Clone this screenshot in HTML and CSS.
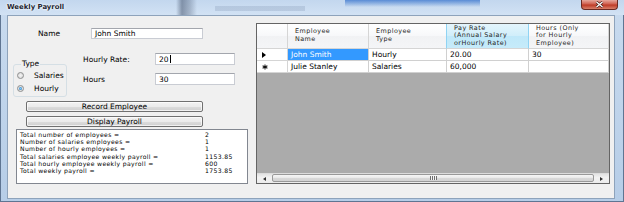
FILE: index.html
```html
<!DOCTYPE html>
<html lang="en">
<head>
  <meta charset="UTF-8" />
  <title>Weekly Payroll</title>
  <link rel="stylesheet" href="styles.css">
</head>
<body>
  <div class="window">
    <div class="titlebar">
      <span class="title">Weekly Payroll</span>
      <span class="close">
        <svg width="9" height="7" viewBox="0 0 9 7"><path d="M1.5 1 L7.5 6 M7.5 1 L1.5 6" stroke="#3a1410" stroke-width="2.6"/><path d="M1.5 1 L7.5 6 M7.5 1 L1.5 6" stroke="#fff" stroke-width="1.4"/></svg>
      </span>
    </div>

    <div class="client">
      <div class="left">
        <div class="name-row">
          <label class="lbl name-lbl">Name</label>
          <div class="textbox name-box">John Smith</div>
        </div>

        <div class="mid">
          <fieldset class="group">
            <legend>Type</legend>
            <div class="radio"><span class="dot"></span>Salaries</div>
            <div class="radio checked"><span class="dot"></span>Hourly</div>
          </fieldset>
          <div class="fields">
            <div class="field">
              <label class="lbl">Hourly Rate:</label>
              <div class="textbox">20<span class="caret"></span></div>
            </div>
            <div class="field">
              <label class="lbl">Hours</label>
              <div class="textbox">30</div>
            </div>
          </div>
        </div>

        <div class="buttons">
          <div class="btn">Record Employee</div>
          <div class="btn">Display Payroll</div>
        </div>

        <div class="listbox">
          <span>Total number of employees =</span><span>2</span>
          <span>Number of salaries employees =</span><span>1</span>
          <span>Number of hourly employees =</span><span>1</span>
          <span>Total salaries employee weekly payroll =</span><span>1153.85</span>
          <span>Total hourly employee weekly payroll =</span><span>600</span>
          <span>Total weekly payroll =</span><span>1753.85</span>
        </div>
      </div>

      <div class="dgv">
        <div class="dgv-table">
          <div class="hdr corner"></div>
          <div class="hdr">Employee<br>Name</div>
          <div class="hdr">Employee<br>Type</div>
          <div class="hdr hot">Pay Rate<br>(Annual Salary<br>orHourly Rate)</div>
          <div class="hdr">Hours (Only<br>for Hourly<br>Employee)</div>

          <div class="rowhdr"><span class="cur-arrow"></span></div>
          <div class="cell selected">John Smith</div>
          <div class="cell">Hourly</div>
          <div class="cell">20.00</div>
          <div class="cell">30</div>

          <div class="rowhdr">
            <svg width="6" height="6" viewBox="0 0 7 7"><path d="M3.5 0.5 V6.5 M0.7 2 L6.3 5 M6.3 2 L0.7 5" stroke="#111" stroke-width="1.2"/></svg>
          </div>
          <div class="cell">Julie Stanley</div>
          <div class="cell">Salaries</div>
          <div class="cell">60,000</div>
          <div class="cell"></div>
        </div>

        <div class="dgv-empty"></div>

        <div class="hscroll">
          <div class="sbtn"><span class="tri-left"></span></div>
          <div class="thumb"><span class="grip"></span></div>
          <div class="sbtn"><span class="tri-right"></span></div>
        </div>
      </div>
    </div>
  </div>
</body>
</html>
```

FILE: styles.css
```css
* {
  box-sizing: border-box;
}

body {
  margin: 0;
  width: 624px;
  height: 202px;
  overflow: hidden;
  font-family: "DejaVu Sans", "Liberation Sans", sans-serif;
  font-size: 7.5px;
  color: #000;
  background: #c0d4ea;
}

.window {
  width: 624px;
  height: 202px;
  display: flex;
  flex-direction: column;
  background: linear-gradient(#c9dbef, #b6cde7);
  box-shadow: inset 1px 0 0 #5f7592, inset -1px 0 0 #5f7592, inset 0 -1px 0 #5f7592;
}

/* title bar */
.titlebar {
  height: 15px;
  flex: none;
  display: flex;
  align-items: flex-start;
  padding-left: 7px;
  background:
    linear-gradient(to right, transparent 176px, rgba(70, 85, 110, 0.55) 182px, rgba(70, 85, 110, 0.3) 190px, transparent 197px),
    linear-gradient(rgba(55, 115, 205, 0.75), rgba(55, 115, 205, 0) 7px) 345px 0 / 135px 100% no-repeat,
    linear-gradient(rgba(120, 140, 170, 0.25), rgba(120, 140, 170, 0.25)) 215px 6px / 90px 5px no-repeat,
    linear-gradient(#c3d7ee, #d2e2f4);
}

.title {
  line-height: 15px;
  font-size: 6.9px;
  font-weight: bold;
  color: #1c2633;
  text-shadow: 0 0 3px #fff, 0 0 2px #fff;
}

.close {
  margin-left: auto;
  margin-right: 6px;
  width: 37px;
  height: 10px;
  display: flex;
  align-items: center;
  justify-content: center;
  border: 1px solid #6a2a22;
  border-top: none;
  border-radius: 0 0 4px 4px;
  background: linear-gradient(#e6a89c, #d0604f 45%, #bd3a25 55%, #d9806a);
}

/* client area */
.client {
  flex: 1;
  margin: 0 9px 3px 7px;
  background: #f0f0f0;
  border: 1px solid #8ea3bb;
  display: flex;
}

.left {
  width: 248px;
  flex: none;
}

.lbl {
  white-space: nowrap;
}

.textbox {
  height: 12px;
  background: #fff;
  border: 1px solid #c9ccd3;
  border-top-color: #a3a6ad;
  padding: 0 3px;
  display: flex;
  align-items: center;
  white-space: nowrap;
}

.caret {
  display: inline-block;
  width: 1px;
  height: 8px;
  background: #000;
  margin-left: 1px;
}

.name-row {
  display: flex;
  align-items: center;
  margin-top: 12px;
  height: 11px;
}

.name-lbl {
  margin-left: 30px;
  width: 53px;
}

.name-box {
  width: 112px;
  height: 11px;
}

.mid {
  display: flex;
  margin-top: 14px;
}

.group {
  margin: 7px 0 0 5px;
  width: 54px;
  height: 37px;
  padding: 0 0 0 3px;
  border: 1px solid #d5dfe5;
  border-radius: 3px;
}

.group legend {
  padding: 0 1px;
  margin-left: 4px;
  line-height: 8px;
}

.radio {
  display: flex;
  align-items: center;
  height: 8px;
  white-space: nowrap;
}

.radio:first-of-type {
  margin-top: 3px;
}

.radio + .radio {
  margin-top: 5px;
}

.dot {
  width: 7px;
  height: 7px;
  border-radius: 50%;
  border: 1px solid #8e8f8f;
  background: radial-gradient(#f4f4f4, #d4d4d4);
  margin-right: 10px;
  display: flex;
  align-items: center;
  justify-content: center;
}

.radio.checked .dot::after {
  content: "";
  width: 3px;
  height: 3px;
  border-radius: 50%;
  background: radial-gradient(#7fd0ff, #1a67b0);
}

.fields {
  margin-left: 16px;
  display: flex;
  flex-direction: column;
  gap: 8px;
}

.field {
  display: flex;
  align-items: center;
  height: 12px;
}

.field .lbl {
  width: 72px;
}

.field .textbox {
  width: 80px;
}

.buttons {
  margin: 4px 0 0 18px;
  display: flex;
  flex-direction: column;
  gap: 4px;
}

.btn {
  width: 177px;
  height: 11px;
  border: 1px solid #707070;
  border-radius: 2px;
  background: linear-gradient(#f2f2f2, #ebebeb 50%, #dddddd 51%, #cfcfcf);
  box-shadow: inset 0 0 0 1px rgba(255, 255, 255, 0.7);
  display: flex;
  align-items: center;
  justify-content: center;
}

.listbox {
  margin: 2px 0 0 8px;
  width: 232px;
  height: 55px;
  background: #fff;
  border: 1px solid #828790;
  padding: 1px 3px;
  display: grid;
  grid-template-columns: 185px auto;
  align-content: start;
  font-size: 6.1px;
  letter-spacing: 0.35px;
  line-height: 7.2px;
  white-space: nowrap;
}

/* data grid */
.dgv {
  margin-top: 7px;
  width: 354px;
  height: 161px;
  border: 1px solid #646464;
  background: #ababab;
  display: flex;
  flex-direction: column;
}

.dgv-table {
  display: grid;
  grid-template-columns: 31px 81px 78px 82px 80px;
  grid-template-rows: 25px 12px 12px;
  background: #fff;
}

.hdr {
  background: linear-gradient(#ffffff, #f7f8fa 50%, #f1f2f4 51%, #f4f5f7);
  border-right: 1px solid #d5d5d5;
  border-bottom: 1px solid #d5d5d5;
  padding-left: 7px;
  display: flex;
  align-items: center;
  font-size: 6.4px;
  letter-spacing: 0.45px;
  line-height: 7.6px;
  color: #1e1e1e;
  white-space: nowrap;
  overflow: hidden;
}

.hdr.hot {
  background: linear-gradient(#e4f5fc, #d0eefa 50%, #bfe8f9 51%, #c6ebfa);
  border-right-color: #8fd3f3;
  border-left: 1px solid #8fd3f3;
  margin-left: -1px;
}

.rowhdr {
  background: #fff;
  border-right: 1px solid #d5d5d5;
  border-bottom: 1px solid #d5d5d5;
  display: flex;
  align-items: center;
  padding-left: 5px;
}

.cur-arrow {
  width: 0;
  height: 0;
  border-left: 4px solid #000;
  border-top: 3px solid transparent;
  border-bottom: 3px solid transparent;
}

.cell {
  border-right: 1px solid #d0d0d0;
  border-bottom: 1px solid #d0d0d0;
  padding-left: 3px;
  display: flex;
  align-items: center;
  white-space: nowrap;
}

.cell.selected {
  background: #3399ff;
  color: #fff;
}

.dgv-empty {
  flex: 1;
}

.hscroll {
  height: 10px;
  flex: none;
  display: flex;
  align-items: stretch;
  background: linear-gradient(#e3e3e3, #f2f2f2 40%, #ececec);
  border-top: 1px solid #dcdcdc;
}

.sbtn {
  width: 15px;
  display: flex;
  align-items: center;
  justify-content: center;
}

.tri-left {
  border-right: 3px solid #303030;
  border-top: 2px solid transparent;
  border-bottom: 2px solid transparent;
}

.tri-right {
  border-left: 3px solid #303030;
  border-top: 2px solid transparent;
  border-bottom: 2px solid transparent;
}

.thumb {
  flex: 1;
  margin: 0 0 1px;
  border: 1px solid #999;
  border-radius: 2px;
  background: linear-gradient(#f6f6f6, #e9e9e9 50%, #dadada 51%, #d2d2d2);
  display: flex;
  align-items: center;
  justify-content: center;
}

.grip {
  width: 7px;
  height: 4px;
  background: repeating-linear-gradient(to right, #6f6f6f 0 1px, #f4f4f4 1px 2px);
}
```
